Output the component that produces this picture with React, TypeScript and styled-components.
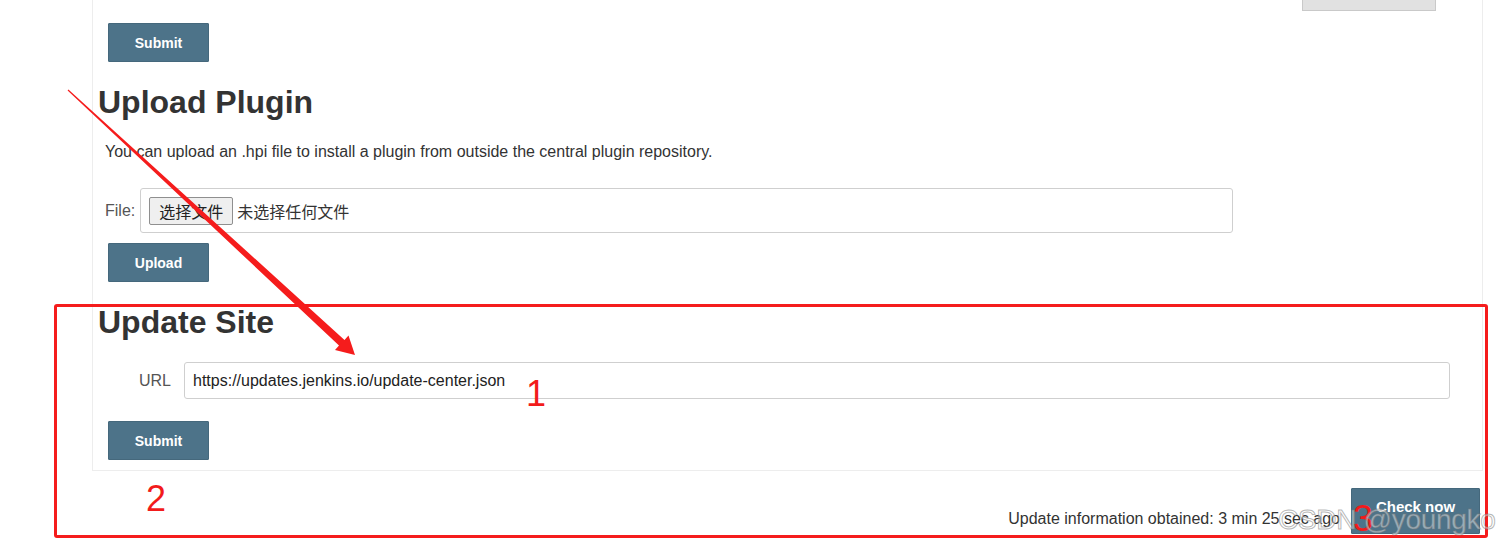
import styled, { createGlobalStyle } from "styled-components";

const GlobalStyle = createGlobalStyle`
  html, body {
    margin: 0;
    padding: 0;
    background: #fff;
  }
  body {
    font-family: "Liberation Sans", Arial, "Noto Sans CJK SC", sans-serif;
    color: #333;
  }
`;

const Page = styled.div`
  position: relative;
  width: 1500px;
  height: 552px;
  overflow: hidden;
`;

const Panel = styled.div`
  margin-left: 92px;
  width: 1389px;
  border: 1px solid #ededed;
  border-top: none;
  padding: 0 0 10px 0;
`;

const TopBar = styled.div`
  display: flex;
  justify-content: flex-end;
  height: 11px;
  padding-right: 46px;
`;

const CutButton = styled.div`
  width: 132px;
  height: 10px;
  background: #e1e1e1;
  border: 1px solid #c9c9c9;
  border-top: none;
`;

const Button = styled.button<{ $wide?: boolean }>`
  display: block;
  box-sizing: border-box;
  width: ${(p) => (p.$wide ? "129px" : "101px")};
  height: ${(p) => (p.$wide ? "46px" : "39px")};
  margin: 0;
  margin-left: ${(p) => (p.$wide ? "0" : "15px")};
  padding: 0 0 ${(p) => (p.$wide ? "10px" : "0")} 0;
  border: 1px solid #45687c;
  border-radius: 1px;
  background: #4d7389;
  color: #fff;
  font-family: "Liberation Sans", Arial, sans-serif;
  font-weight: 700;
  font-size: ${(p) => (p.$wide ? "15px" : "14px")};
`;

const Heading = styled.h1`
  margin: 21px 0 0 5px;
  font-size: 32px;
  line-height: 38px;
  font-weight: 700;
  color: #333;
`;

const Description = styled.p`
  margin: 21px 0 0 12px;
  font-size: 16px;
  line-height: 20px;
  color: #333;
`;

const FieldRow = styled.div<{ $indent: number; $gap: number }>`
  display: flex;
  align-items: center;
  gap: ${(p) => p.$gap}px;
  padding-left: ${(p) => p.$indent}px;
`;

const Label = styled.label`
  font-size: 16px;
  color: #555;
`;

const FileBox = styled.div`
  display: flex;
  align-items: center;
  gap: 4px;
  box-sizing: border-box;
  width: 1093px;
  height: 45px;
  padding-left: 8px;
  border: 1px solid #cfcfcf;
  border-radius: 3px;
  font-family: "Noto Sans CJK SC", sans-serif;
  font-size: 16px;
  color: #333;
`;

const ChooseButton = styled.span`
  display: flex;
  align-items: center;
  box-sizing: border-box;
  width: 84px;
  height: 28px;
  padding-left: 9px;
  background: #efefef;
  border: 1px solid #8f8f8f;
  border-radius: 2px;
  color: #222;
`;

const UrlInput = styled.div`
  display: flex;
  align-items: center;
  box-sizing: border-box;
  width: 1266px;
  height: 37px;
  padding-left: 8px;
  border: 1px solid #cfcfcf;
  border-radius: 3px;
  font-size: 16px;
  color: #222;
`;

const Spacer = styled.div<{ $h: number }>`
  height: ${(p) => p.$h}px;
`;

const BottomRow = styled.div`
  display: flex;
  justify-content: flex-end;
  align-items: flex-end;
  gap: 11px;
  margin-top: 17px;
  padding-right: 20px;
`;

const StatusText = styled.span`
  font-size: 16px;
  line-height: 20px;
  margin-bottom: 5px;
  color: #333;
`;

const Overlay = styled.svg`
  position: absolute;
  left: 0;
  top: 0;
  pointer-events: none;
`;

const MarkBox = styled.div`
  position: absolute;
  left: 54px;
  top: 304px;
  width: 1428px;
  height: 228px;
  border: 3px solid #f51c1c;
  border-radius: 3px;
  pointer-events: none;
`;

const MarkNumber = styled.span<{ $x: number; $y: number }>`
  position: absolute;
  left: ${(p) => p.$x}px;
  top: ${(p) => p.$y}px;
  font-family: "Liberation Sans", Arial, sans-serif;
  font-weight: 400;
  font-size: 36px;
  line-height: 40px;
  color: #f21b1b;
`;

const Watermark = styled.span`
  position: absolute;
  left: 1278px;
  top: 503px;
  font-family: "Liberation Sans", Arial, sans-serif;
  font-size: 28px;
  line-height: 34px;
  letter-spacing: -0.3px;
  color: rgba(255, 255, 255, 0.45);
  -webkit-text-stroke: 1px rgba(120, 120, 120, 0.55);
  white-space: nowrap;
`;

export default function App() {
  return (
    <Page>
      <GlobalStyle />
      <Panel>
        <TopBar>
          <CutButton />
        </TopBar>
        <Spacer $h={12} />
        <Button>Submit</Button>

        <Heading>Upload Plugin</Heading>
        <Description>
          You can upload an .hpi file to install a plugin from outside the central plugin repository.
        </Description>
        <Spacer $h={26} />
        <FieldRow $indent={12} $gap={5}>
          <Label>File:</Label>
          <FileBox>
            <ChooseButton>选择文件</ChooseButton>
            <span>未选择任何文件</span>
          </FileBox>
        </FieldRow>
        <Spacer $h={10} />
        <Button>Upload</Button>

        <Heading>Update Site</Heading>
        <Spacer $h={21} />
        <FieldRow $indent={46} $gap={13}>
          <Label>URL</Label>
          <UrlInput>https://updates.jenkins.io/update-center.json</UrlInput>
        </FieldRow>
        <Spacer $h={22} />
        <Button>Submit</Button>
      </Panel>

      <BottomRow>
        <StatusText>Update information obtained: 3 min 25 sec ago</StatusText>
        <Button $wide>Check now</Button>
      </BottomRow>

      <MarkBox />
      <MarkNumber $x={526} $y={374}>1</MarkNumber>
      <MarkNumber $x={146} $y={479}>2</MarkNumber>
      <MarkNumber $x={1353} $y={499}>3</MarkNumber>
      <Watermark>CSDN @youngko</Watermark>

      <Overlay width="1500" height="552" viewBox="0 0 1500 552">
        <polygon
          fill="#f51c1c"
          points="68.4,89.5 344.5,339.9 348.5,335.5 355,355 335,350 339,345.6 67.6,90.5"
        />
      </Overlay>
    </Page>
  );
}
